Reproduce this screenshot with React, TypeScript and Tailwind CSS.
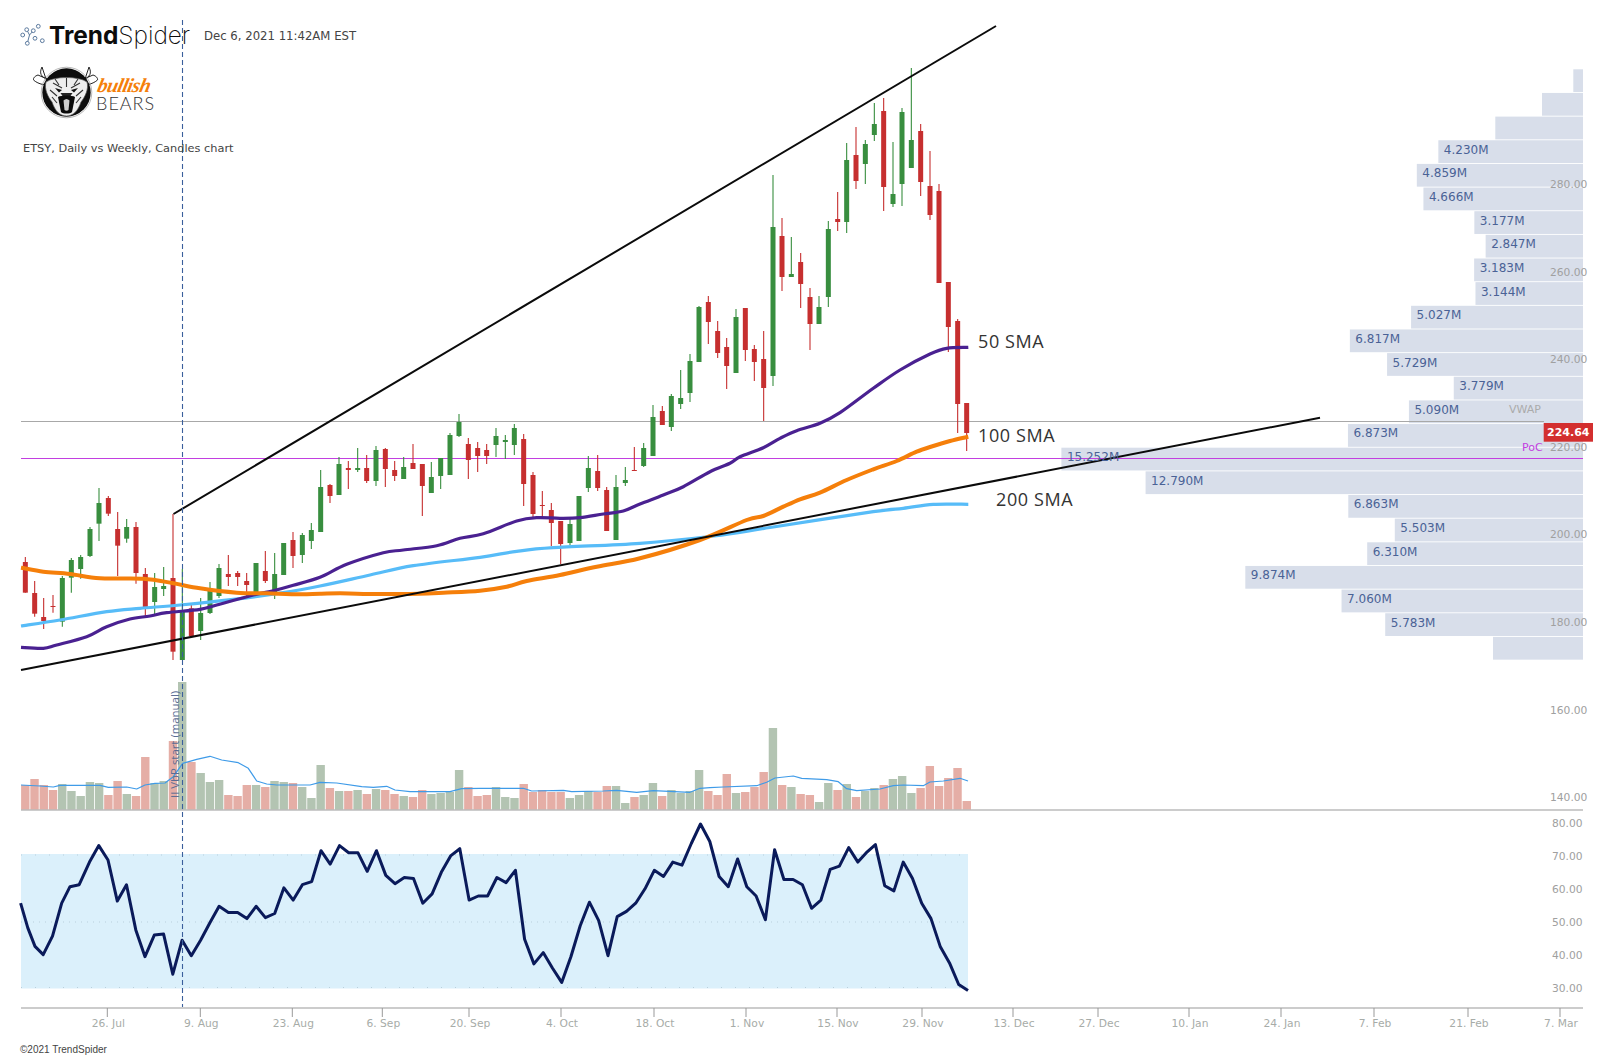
import React from "react";

type C = [string, number, number, number, number];
type P = [number, number];

const RED = "#c62f2f";
const GREEN = "#388e3f";

const conv = (y0: number, s: number, arr: C[]): C[] =>
  arr.map(([c, a, b, d, e]) => [c, y0 + a * s, y0 + b * s, y0 + d * s, y0 + e * s]);

const candles: C[] = [
  ...conv(420, 1 / 3, [
    ["r", 426, 518, 411, 518], ["r", 519, 581, 483, 590], ["r", 591, 603, 534, 627], ["r", 558, 560, 525, 578],
    ["g", 474, 605, 468, 620], ["g", 420, 473, 414, 518], ["g", 411, 447, 405, 476], ["g", 327, 408, 321, 411],
    ["g", 249, 311, 204, 363], ["r", 234, 281, 228, 288], ["r", 327, 377, 276, 468], ["g", 321, 356, 297, 368],
    ["r", 321, 459, 306, 491], ["r", 462, 567, 444, 588], ["g", 501, 546, 459, 585], ["g", 498, 507, 441, 528],
    ["r", 474, 695, 282, 720], ["g", 570, 720, 447, 720], ["r", 565, 648, 555, 650], ["g", 579, 633, 534, 660],
    ["g", 513, 579, 486, 582], ["g", 444, 528, 432, 534], ["r", 462, 471, 405, 498], ["r", 459, 471, 453, 498],
    ["r", 483, 495, 459, 530], ["g", 429, 520, 429, 520], ["r", 453, 483, 393, 489], ["g", 462, 522, 399, 537],
    ["g", 369, 465, 369, 465], ["r", 360, 408, 336, 444], ["g", 345, 405, 339, 429], ["g", 330, 363, 309, 387],
    ["g", 201, 336, 150, 336],
  ]),
  ...conv(400, 1 / 3, [
    ["r", 255, 288, 252, 309], ["g", 192, 285, 171, 285], ["r", 204, 210, 183, 267], ["g", 204, 210, 144, 216],
    ["r", 204, 243, 165, 249], ["g", 150, 243, 138, 258], ["r", 147, 207, 144, 261], ["r", 210, 228, 183, 243],
    ["g", 201, 237, 171, 237], ["r", 189, 207, 132, 207], ["r", 192, 258, 192, 348], ["g", 231, 279, 186, 279],
    ["g", 174, 228, 174, 267], ["g", 105, 225, 99, 225], ["g", 66, 108, 42, 111], ["r", 132, 180, 114, 237],
    ["r", 144, 168, 126, 216], ["r", 150, 168, 132, 192], ["g", 108, 135, 84, 171], ["g", 120, 126, 105, 177],
    ["g", 84, 135, 72, 165], ["r", 117, 252, 102, 318], ["r", 225, 342, 216, 354], ["r", 315, 318, 273, 354],
    ["r", 330, 369, 309, 438], ["r", 363, 432, 363, 492], ["g", 372, 429, 357, 435], ["g", 288, 423, 288, 423],
    ["g", 204, 264, 168, 276], ["r", 213, 264, 165, 273], ["r", 270, 393, 261, 393], ["g", 261, 420, 225, 420],
    ["g", 240, 249, 201, 258], ["r", 210, 213, 141, 213],
  ]),
  ...conv(280, 1 / 3, [
    ["g", 504, 558, 489, 561], ["g", 411, 528, 375, 528], ["r", 393, 435, 378, 435], ["g", 348, 441, 342, 453],
    ["g", 354, 372, 270, 387], ["g", 243, 339, 222, 366], ["g", 81, 246, 78, 246], ["r", 66, 126, 48, 192],
    ["r", 153, 219, 123, 234], ["r", 201, 258, 174, 327], ["g", 111, 279, 87, 279], ["r", 84, 210, 84, 243],
    ["r", 207, 246, 195, 303], ["r", 237, 324, 153, 423],
  ]),
  ...conv(0, 1, [
    ["g", 227, 376, 175, 386], ["r", 236, 277, 218, 291], ["g", 274, 277, 237, 277], ["r", 262, 284, 253, 308],
    ["r", 297, 324, 288, 350], ["g", 307, 324, 296, 324], ["g", 229, 297, 221, 307], ["r", 219, 222, 192, 231],
    ["g", 160, 222, 143, 233], ["r", 155, 181, 127, 189], ["g", 144, 164, 140, 184], ["g", 124, 135, 103, 141],
    ["r", 111, 187, 98, 211], ["g", 194, 204, 142, 207], ["g", 112, 184, 108, 206], ["g", 140, 168, 68, 168],
    ["r", 131, 182, 124, 196], ["r", 186, 215, 151, 220], ["r", 191, 283, 184, 283], ["r", 282, 327, 282, 352],
    ["r", 321, 404, 319, 433], ["r", 403, 433, 403, 451],
  ]),
];

const cx = (i: number) => 25.3 + i * 9.23;

const volumes: [string, number][] = [
  ...([
    ["r", 375], ["r", 357], ["r", 375], ["r", 390], ["g", 372], ["g", 393], ["g", 408], ["g", 366], ["g", 369], ["r", 405],
    ["r", 363], ["g", 402], ["r", 408], ["r", 291], ["g", 369], ["g", 363], ["r", 243], ["g", 66], ["r", 306], ["g", 339],
    ["g", 366], ["g", 360], ["r", 405], ["r", 408], ["r", 375], ["g", 375], ["r", 381], ["g", 363], ["g", 366], ["r", 369],
    ["g", 381], ["g", 414], ["g", 315], ["r", 384], ["g", 393], ["r", 393], ["g", 390], ["r", 402], ["g", 387], ["r", 390],
    ["r", 402], ["g", 408], ["r", 411], ["r", 390], ["g", 402], ["g", 399], ["g", 396], ["g", 330], ["r", 381], ["r", 408],
  ] as [string, number][]).map(([c, z]): [string, number] => [c, 660 + z / 3]),
  ...([
    ["r", 315], ["g", 291], ["g", 321], ["g", 324], ["r", 282], ["r", 306], ["r", 300], ["r", 306], ["r", 306], ["g", 324],
    ["g", 315], ["g", 303], ["r", 306], ["r", 288], ["g", 288], ["g", 339], ["r", 321], ["g", 315], ["g", 279], ["r", 318],
    ["g", 300], ["g", 309], ["g", 303], ["g", 240], ["r", 303], ["r", 315], ["r", 252], ["g", 309], ["r", 306], ["r", 291],
    ["r", 246], ["g", 114], ["r", 285], ["g", 291], ["r", 312], ["r", 315], ["g", 336], ["g", 279], ["r", 300], ["g", 282],
    ["r", 321], ["g", 303], ["g", 294], ["r", 285], ["g", 267], ["g", 258], ["g", 309], ["r", 294], ["r", 228], ["r", 288],
    ["r", 264], ["r", 234], ["r", 333],
  ] as [string, number][]).map(([c, z]): [string, number] => [c, 690 + z / 3]),
];

const zp = (x0: number, y0: number, a: P[]): P[] => a.map(([x, y]) => [x0 + x / 3, y0 + y / 3]);

const orange: P[] = [
  ...zp(0, 420, [[63, 443], [130, 455], [210, 462], [300, 475], [430, 476], [520, 490], [600, 505], [710, 518], [800, 520], [900, 523]]),
  ...zp(320, 400, [[0, 581], [60, 580], [130, 582], [250, 582], [370, 578], [480, 572], [560, 560], [620, 543], [720, 525], [830, 500], [960, 475]]),
  [700, 540],
  ...zp(640, 280, [[320, 720], [370, 708], [430, 680], [480, 658], [540, 638], [620, 600], [700, 568], [770, 543], [830, 515], [880, 498], [930, 483], [985, 470]]),
];
const purple: P[] = [
  ...zp(0, 420, [[63, 682], [130, 685], [170, 675], [260, 650], [320, 620], [390, 597], [450, 588], [500, 578], [600, 568], [650, 555], [760, 525], [820, 512], [880, 496]]),
  ...zp(320, 400, [[0, 532], [80, 493], [190, 458], [250, 450], [350, 437], [420, 415], [490, 401], [590, 363], [650, 353], [720, 355], [780, 353], [850, 342], [910, 333]]),
  ...zp(640, 280, [[0, 672], [70, 645], [130, 620], [210, 575], [270, 550], [300, 530], [370, 503], [420, 475], [470, 452], [540, 430], [600, 398], [700, 325], [780, 270], [870, 222], [920, 205], [985, 202]]),
];
const blue: P[] = [
  ...zp(0, 420, [[63, 618], [180, 600], [320, 575], [420, 565], [540, 555], [700, 538], [850, 518]]),
  ...zp(320, 400, [[0, 558], [150, 525], [280, 497], [480, 472], [590, 454], [700, 443], [960, 430]]),
  [714, 536], [770, 527.5],
  ...zp(640, 280, [[700, 695], [790, 685], [880, 673], [985, 673]]),
];
const volLine: P[] = [
  ...zp(0, 660, [[63, 375], [120, 378], [160, 381], [180, 376], [300, 376], [325, 382], [380, 381], [410, 387], [435, 375], [465, 370], [495, 369], [520, 350], [548, 310], [590, 298], [630, 289], [665, 300], [715, 308], [745, 325], [770, 363], [800, 372], [830, 375], [930, 375], [960, 367], [1010, 369], [1085, 380], [1120, 382], [1160, 379], [1185, 390], [1230, 395], [1350, 395], [1385, 386], [1440, 385]]),
  ...zp(480, 690, [[0, 295], [130, 295], [155, 303], [250, 301], [275, 305], [370, 303], [410, 301], [470, 307], [520, 302], [630, 307], [660, 295], [690, 293], [730, 291], [830, 287], [860, 277], [885, 264], [940, 258], [965, 265], [1040, 269], [1075, 275], [1100, 296], [1130, 302], [1200, 297], [1240, 287], [1270, 285], [1330, 287], [1350, 276], [1390, 273], [1440, 265]]),
  [968, 781],
];

const rsiShown: P[] = [
  [20, 878], [27, 902], [34, 920], [42, 928], [51, 910], [60, 878], [68, 862], [77, 860], [87, 838], [96, 822], [105, 836], [114, 876], [123, 860], [132, 904], [141, 930], [150, 909], [159, 908], [168, 947], [177, 914], [186, 929], [195, 914], [204, 897], [213, 881], [222, 887], [231, 887], [240, 893], [249, 881], [258, 892], [267, 888], [276, 863], [285, 875], [294, 860], [303, 857], [312, 827], [321, 840], [330, 822], [339, 829], [348, 829], [357, 847], [366, 827], [375, 851], [384, 859], [393, 853], [402, 854], [411, 878], [420, 869], [429, 848], [438, 832], [447, 825], [456, 875], [465, 871], [474, 871], [483, 853], [492, 858], [501, 846], [510, 913], [519, 937], [528, 926], [537, 941], [546, 955], [555, 930], [564, 900], [573, 877], [582, 895], [591, 929], [600, 891], [609, 886], [618, 878], [627, 864], [636, 846], [645, 852], [654, 838], [663, 841], [672, 820], [681, 801], [690, 818], [699, 852], [708, 862], [717, 835], [726, 862], [735, 871], [744, 894], [753, 826], [762, 855], [771, 855], [780, 860], [789, 883], [798, 875], [807, 845], [816, 842], [825, 824], [834, 838], [843, 828], [851, 821], [860, 861], [869, 866], [878, 838], [887, 854], [896, 878], [905, 893], [914, 920], [923, 936], [932, 957], [941, 963],
];
const rsi: P[] = rsiShown.map(([x, y]) => [x * 1.0287, y * 1.0287]);

const poly = (p: P[]) => p.map(([x, y]) => `${x.toFixed(1)},${y.toFixed(1)}`).join(" ");

const smooth = (p: P[]) => {
  let d = `M${p[0][0].toFixed(1)} ${p[0][1].toFixed(1)}`;
  for (let i = 0; i < p.length - 1; i++) {
    const a = p[Math.max(0, i - 1)];
    const b = p[i];
    const c = p[i + 1];
    const e = p[Math.min(p.length - 1, i + 2)];
    d += ` C${(b[0] + (c[0] - a[0]) / 6).toFixed(1)} ${(b[1] + (c[1] - a[1]) / 6).toFixed(1)} ${(c[0] - (e[0] - b[0]) / 6).toFixed(1)} ${(c[1] - (e[1] - b[1]) / 6).toFixed(1)} ${c[0].toFixed(1)} ${c[1].toFixed(1)}`;
  }
  return d;
};

const RIGHT = 1583;
const ROW0 = 69.3;
const ROWH = 23.65;
const PX_PER_M = 34.2;
const rows: (string | number)[] = [
  9.7, 41, 87.7, "4.230", "4.859", "4.666", "3.177", "2.847", "3.183", "3.144", "5.027", "6.817", "5.729",
  "3.779", "5.090", "6.873", "15.252", "12.790", "6.863", "5.503", "6.310", "9.874", "7.060", "5.783", 90,
];

const priceLabels = ["280.00", "260.00", "240.00", "220.00", "200.00", "180.00", "160.00", "140.00"];
const rsiLabels = ["80.00", "70.00", "60.00", "50.00", "40.00", "30.00"];
const dates: [string, number][] = [
  ["26. Jul", 107.3], ["9. Aug", 200.3], ["23. Aug", 292.3], ["6. Sep", 382.3], ["20. Sep", 469], ["4. Oct", 561],
  ["18. Oct", 654], ["1. Nov", 746], ["15. Nov", 837], ["29. Nov", 922], ["13. Dec", 1013], ["27. Dec", 1098],
  ["10. Jan", 1189], ["24. Jan", 1281], ["7. Feb", 1374], ["21. Feb", 1468], ["7. Mar", 1560],
];

function Chart() {
  return (
    <svg width={1613} height={1059} viewBox="0 0 1613 1059" className="block font-['DejaVu_Sans',sans-serif]">
      {/* RSI band */}
      <rect x={21} y={854} width={947} height={134.5} fill="#dbf0fb" />
      <line x1={21} x2={968} y1={987.5} y2={987.5} stroke="#b9cfdc" strokeWidth={1} strokeDasharray="1 13" />
      <line x1={21} x2={968} y1={855} y2={855} stroke="#b9cfdc" strokeWidth={1} strokeDasharray="1 13" />
      <line x1={21} x2={968} y1={922} y2={922} stroke="#b9cfdc" strokeWidth={1} strokeDasharray="1 5" />

      {/* Volume profile */}
      {rows.map((r, i) => {
        const w = typeof r === "string" ? parseFloat(r) * PX_PER_M : r;
        const y = ROW0 + i * ROWH;
        return <rect key={i} x={RIGHT - w} y={y} width={w} height={ROWH - 0.9} fill="#d8deea" />;
      })}

      {/* Volume bars */}
      {volumes.map(([c, top], i) => (
        <rect key={i} x={cx(i) - 4.2} y={top} width={8.4} height={810 - top} fill={c === "r" ? "#e5aea6" : "#b3c4b2"} />
      ))}
      <line x1={21} x2={RIGHT} y1={810} y2={810} stroke="#bbbbbb" strokeWidth={1.6} />
      <polyline points={poly(volLine)} fill="none" stroke="#3f9be8" strokeWidth={1.2} strokeLinejoin="round" />

      {/* Horizontal levels */}
      <line x1={21} x2={1544} y1={421.5} y2={421.5} stroke="#a8a8a8" strokeWidth={1} />
      <line x1={21} x2={RIGHT} y1={458.5} y2={458.5} stroke="#c23fe0" strokeWidth={1} />

      {/* Candles */}
      {candles.map(([c, bt, bb, wt, wb], i) => {
        const x = Math.round(cx(i) * 3) / 3;
        const col = c === "r" ? RED : GREEN;
        return (
          <g key={i}>
            <line x1={x} x2={x} y1={wt} y2={wb} stroke={col} strokeWidth={1.1} />
            <rect x={x - 2.5} y={bt} width={5} height={Math.max(bb - bt, 1)} fill={col} />
          </g>
        );
      })}

      {/* Moving averages */}
      <path d={smooth(blue)} fill="none" stroke="#57bcf8" strokeWidth={3.2} />
      <path d={smooth(purple)} fill="none" stroke="#4a2191" strokeWidth={3.2} />
      <path d={smooth(orange)} fill="none" stroke="#f57f0a" strokeWidth={4} />

      {/* Trend lines */}
      <line x1={173.5} y1={514} x2={996} y2={26} stroke="#0b0b0b" strokeWidth={2} />
      <line x1={21} y1={670} x2={1320} y2={417.7} stroke="#0b0b0b" strokeWidth={2} />

      {/* RSI */}
      <polyline points={poly(rsi)} fill="none" stroke="#0a1a5a" strokeWidth={3} strokeLinejoin="round" />

      {/* VbP start */}
      <text
        transform="translate(179,798) rotate(-90)"
        fontSize={11.4}
        fill="#5b6c93"
        className="font-['Open_Sans',sans-serif]"
      >
        {"II VbP start (manual)"}
      </text>
      <line x1={182.5} x2={182.5} y1={20} y2={1007} stroke="#3a5f9c" strokeWidth={1.1} strokeDasharray="5 3" />

      {/* Profile labels */}
      {rows.map((r, i) =>
        typeof r === "string" ? (
          <text key={i} x={RIGHT - parseFloat(r) * PX_PER_M + 5.5} y={ROW0 + i * ROWH + 13.4} fontSize={12} fill="#4a6296">
            {r}M
          </text>
        ) : null,
      )}

      {/* Right axis labels */}
      {priceLabels.map((t, i) => (
        <text key={t} x={1550} y={188 + i * 87.6} fontSize={10.7} fill="#a0a0a0">
          {t}
        </text>
      ))}
      {rsiLabels.map((t, i) => (
        <text key={t} x={1552} y={827 + i * 32.9} fontSize={10.7} fill="#a0a0a0">
          {t}
        </text>
      ))}
      <text x={1509} y={413} fontSize={11} fill="#ababab">
        VWAP
      </text>
      <text x={1522} y={451} fontSize={11} fill="#c23fe0">
        PoC
      </text>
      <rect x={1543.7} y={423} width={49.3} height={18.7} fill="#d32f2f" />
      <text x={1568.3} y={436.4} textAnchor="middle" fontSize={11} fontWeight={700} fill="#ffffff">
        224.64
      </text>

      {/* Time axis */}
      <line x1={21} x2={RIGHT} y1={1008} y2={1008} stroke="#999999" strokeWidth={1} />
      {dates.map(([t, x]) => (
        <g key={t}>
          <line x1={x} x2={x} y1={1008} y2={1017} stroke="#999999" strokeWidth={1} />
          <text x={x + 1} y={1027} textAnchor="middle" fontSize={10.7} fill="#a7aca8">
            {t}
          </text>
        </g>
      ))}

      {/* MA captions */}
      <text x={978} y={348} fontSize={18} letterSpacing={0.6} fill="#333333" className="font-['Open_Sans',sans-serif]">
        50 SMA
      </text>
      <text x={978} y={441.5} fontSize={18} letterSpacing={0.6} fill="#333333" className="font-['Open_Sans',sans-serif]">
        100 SMA
      </text>
      <text x={996} y={505.5} fontSize={18} letterSpacing={0.6} fill="#333333" className="font-['Open_Sans',sans-serif]">
        200 SMA
      </text>
    </svg>
  );
}

function SpiderMark() {
  const nodes: P[] = [[3.7, 12], [7.7, 6.7], [19.3, 3.3], [14.3, 7.7], [8.3, 20.3], [16, 15.3], [23.3, 17.7]];
  return (
    <svg width={27} height={25} viewBox="0 0 27 25" className="shrink-0">
      <polyline points="7.7,6.7 10.5,12 8.3,20.3" fill="none" stroke="#5b7a9e" strokeWidth={1} />
      <polyline points="10.5,12 14.3,7.7" fill="none" stroke="#5b7a9e" strokeWidth={1} />
      {nodes.map(([x, y], i) => (
        <circle key={i} cx={x} cy={y} r={1.9} fill="#ffffff" stroke="#5b7a9e" strokeWidth={1} />
      ))}
    </svg>
  );
}

function BearMark() {
  return (
    <svg width={66} height={56} viewBox="0 0 66 56" className="shrink-0">
      <path d="M9 2 C6 8 8 12 14 14 L5 10 C2 11 0 13 0.5 15 C5 19 11 20 15 20 Z" fill="#ffffff" stroke="#222" strokeWidth={1} />
      <path d="M56 2 C59 8 57 12 51 14 L60 10 C63 11 65 13 64.5 15 C60 19 54 20 50 20 Z" fill="#ffffff" stroke="#222" strokeWidth={1} />
      <circle cx={33.5} cy={27.5} r={24.2} fill="#0d0d0d" />
      <circle cx={33.5} cy={27.5} r={25.3} fill="none" stroke="#999" strokeWidth={0.7} />
      <path d="M13 17 C21 11 46 11 54 17 C56 24 52 32 48 37 C45 46 40 51 33.5 51 C27 51 22 46 19 37 C15 32 11 24 13 17 Z" fill="#eeeeee" stroke="#555" strokeWidth={0.7} />
      <path d="M20 18 L29 23 M47 18 L38 23 M17 25 L24 31 M50 25 L43 31 M22 14 L26 20 M45 14 L41 20 M33.5 13 L33.5 22 M19 32 L24 38 M48 32 L43 38" stroke="#333" strokeWidth={1.1} />
      <path d="M22 23 L29 25 L26 27.5 Z M45 23 L38 25 L41 27.5 Z" fill="#111" />
      <path d="M27.5 28 L39.5 28 L37.5 31 L29.5 31 Z" fill="#222" />
      <path d="M25 32 C28 30 39 30 42 32 L39 47 C37 49 30 49 28 47 Z" fill="#0a0a0a" />
      <path d="M30.5 35.5 C32.5 33.5 34.5 33.5 36.5 35.5 L35.5 45 C34.5 46 32.5 46 31.5 45 Z" fill="#cfcfcf" />
    </svg>
  );
}

export default function App() {
  return (
    <div className="relative h-[1059px] w-[1613px] overflow-hidden bg-white">
      <Chart />
      <div className="absolute left-[19px] top-[23px] flex flex-col">
        <div className="flex items-center gap-[3px]">
          <SpiderMark />
          <div className="w-[155px] whitespace-nowrap font-['Inter',sans-serif] text-[24.4px] leading-[25px] text-[#0c0c0c]">
            <span className="font-bold">Trend</span>
            <span className="font-extralight">Spider</span>
          </div>
          <div className="-ml-[3px] mt-[1px] whitespace-nowrap font-['DejaVu_Sans',sans-serif] text-[11.7px] leading-[14px] text-[#444444]">
            Dec 6, 2021 11:42AM EST
          </div>
        </div>
        <div className="ml-[14px] mt-[17px] flex h-[56px] items-center">
          <BearMark />
          <div className="-ml-[1px] flex flex-col">
            <span className="-skew-x-12 font-['Liberation_Serif',serif] text-[20px] font-bold italic leading-[20px] tracking-[-0.6px] text-[#f57f0a]">
              bullish
            </span>
            <span className="-ml-[2px] font-['Lato',sans-serif] text-[18px] font-light leading-[16px] tracking-[1px] text-[#333333]">
              BEARS
            </span>
          </div>
        </div>
        <div className="ml-[4px] mt-[20px] whitespace-nowrap font-['DejaVu_Sans',sans-serif] text-[11.35px] leading-[14px] text-[#444444]">
          ETSY, Daily vs Weekly, Candles chart
        </div>
      </div>
      <div className="absolute left-[20px] top-[1044px] font-['Liberation_Sans',sans-serif] text-[10px] leading-[12px] text-[#444444]">
        ©2021 TrendSpider
      </div>
    </div>
  );
}
